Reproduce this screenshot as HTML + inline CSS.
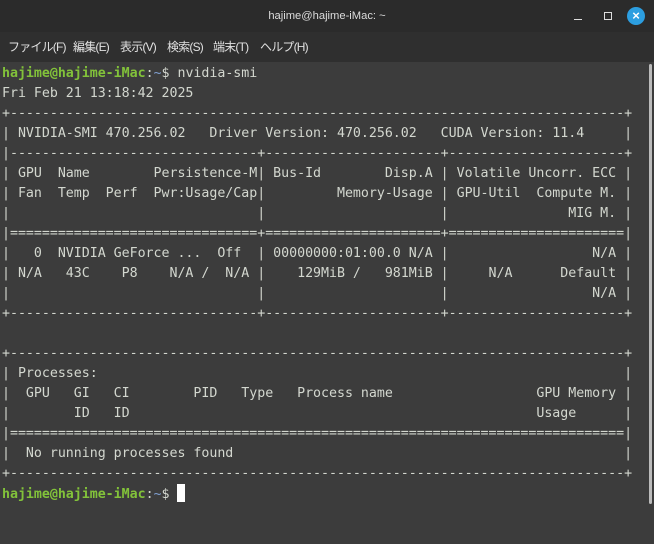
<!DOCTYPE html>
<html><head><meta charset="utf-8"><style>
body{margin:0;width:654px;height:544px;overflow:hidden;background:#3c3c3c;font-family:"Liberation Sans","Noto Sans CJK JP",sans-serif}
#title{position:absolute;left:0;top:0;width:654px;height:32px;background:#2b2b2b;color:#dcdcdc;font-size:11.2px;text-align:center;line-height:32px}
#menu{position:absolute;left:0;top:32px;width:654px;height:30px;background:#2f2f2f;color:#e0e0e0;font-size:12px;letter-spacing:-0.8px;line-height:30px}
#menu span{position:absolute}
#term{position:absolute;left:2px;top:64px;margin:0;font-family:"DejaVu Sans Mono","Liberation Mono",monospace;font-size:13.3px;letter-spacing:-0.03px;line-height:20px;color:#d3d7cf;white-space:pre}
.g{color:#82c23a;font-weight:bold}.b{color:#7f9fd0}
#cur{display:inline-block;width:8px;height:18px;background:#fff;vertical-align:-4px}
#sb{position:absolute;left:649px;top:64px;width:3px;height:440px;background:#bbb;border-radius:2px}
</style></head><body>
<div id="title">hajime@hajime-iMac: ~
<div style="position:absolute;left:574px;top:19px;width:8px;height:1px;background:#ddd"></div>
<div style="position:absolute;left:604px;top:12px;width:6px;height:6px;border:1px solid #ddd"></div>
<div style="position:absolute;left:627px;top:7px;width:18px;height:18px;border-radius:50%;background:#2c9ee0;color:#fff;font-size:13px;line-height:18px;font-weight:bold">×</div>
</div>
<div id="menu"><span style="left:8px">ファイル(F)</span><span style="left:73px">編集(E)</span><span style="left:120px">表示(V)</span><span style="left:167px">検索(S)</span><span style="left:213px">端末(T)</span><span style="left:260px">ヘルプ(H)</span></div>
<pre id="term"><span class="g">hajime@hajime-iMac</span>:<span class="b">~</span>$ nvidia-smi
Fri Feb 21 13:18:42 2025
+-----------------------------------------------------------------------------+
| NVIDIA-SMI 470.256.02   Driver Version: 470.256.02   CUDA Version: 11.4     |
|-------------------------------+----------------------+----------------------+
| GPU  Name        Persistence-M| Bus-Id        Disp.A | Volatile Uncorr. ECC |
| Fan  Temp  Perf  Pwr:Usage/Cap|         Memory-Usage | GPU-Util  Compute M. |
|                               |                      |               MIG M. |
|===============================+======================+======================|
|   0  NVIDIA GeForce ...  Off  | 00000000:01:00.0 N/A |                  N/A |
| N/A   43C    P8    N/A /  N/A |    129MiB /   981MiB |     N/A      Default |
|                               |                      |                  N/A |
+-------------------------------+----------------------+----------------------+

+-----------------------------------------------------------------------------+
| Processes:                                                                  |
|  GPU   GI   CI        PID   Type   Process name                  GPU Memory |
|        ID   ID                                                   Usage      |
|=============================================================================|
|  No running processes found                                                 |
+-----------------------------------------------------------------------------+
<span class="g">hajime@hajime-iMac</span>:<span class="b">~</span>$ <span id="cur"></span></pre>
<div id="sb"></div>
</body></html>
